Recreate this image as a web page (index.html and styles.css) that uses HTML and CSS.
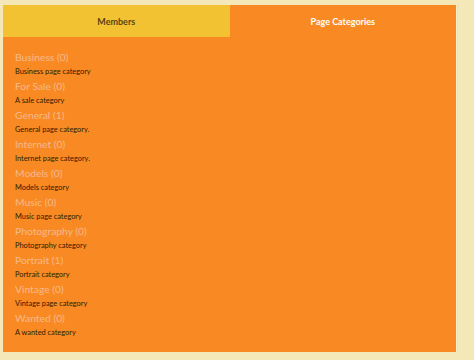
FILE: index.html
```html
<!DOCTYPE html>
<html lang="en">
<head>
    <meta charset="UTF-8">
    <meta name="viewport" content="width=device-width, initial-scale=1.0">
    <title>Page Categories</title>
    <link rel="stylesheet" href="styles.css">
</head>
<body>

<div class="panel">
    <div class="tabs">
        <a href="#" class="tab">Members</a>
        <a href="#" class="tab active">Page Categories</a>
    </div>

    <ul class="categories">
        <li><a href="#" class="cat-name">Business (0)</a><p>Business page category</p></li>
        <li><a href="#" class="cat-name">For Sale (0)</a><p>A sale category</p></li>
        <li><a href="#" class="cat-name">General (1)</a><p>General page category.</p></li>
        <li><a href="#" class="cat-name">Internet (0)</a><p>Internet page category.</p></li>
        <li><a href="#" class="cat-name">Models (0)</a><p>Models category</p></li>
        <li><a href="#" class="cat-name">Music (0)</a><p>Music page category</p></li>
        <li><a href="#" class="cat-name">Photography (0)</a><p>Photography category</p></li>
        <li><a href="#" class="cat-name">Portrait (1)</a><p>Portrait category</p></li>
        <li><a href="#" class="cat-name">Vintage (0)</a><p>Vintage page category</p></li>
        <li><a href="#" class="cat-name">Wanted (0)</a><p>A wanted category</p></li>
    </ul>
</div>

</body>
</html>
```

FILE: styles.css
```css
body {
    font-family: Lato, sans-serif;
    background: #f5e8b8;
    margin: 0;
    padding: 5px 18px 8px 3px;
}
.panel {
    background: #f98a23;
    height: 347px;
    box-shadow: 1px 0 0 #f8efcc, 2px 0 0 #f1e2ac;
}
.tabs {
    display: flex;
    height: 32px;
}
.tab {
    flex: 1;
    display: flex;
    justify-content: center;
    align-items: center;
    font-size: 9px;
    font-weight: bold;
    text-decoration: none;
    color: #5b4413;
    background: #f2c232;
}
.tab.active {
    background: #f98a23;
    color: #fff;
}
.categories {
    list-style: none;
    margin: 0;
    padding: 12px 12px 0;
}
.cat-name {
    display: block;
    font-size: 10.3px;
    line-height: 16px;
    color: #f6b98b;
    text-decoration: none;
}
.categories p {
    margin: 0;
    font-size: 7.4px;
    line-height: 13px;
    color: #2e1a02;
}
```
